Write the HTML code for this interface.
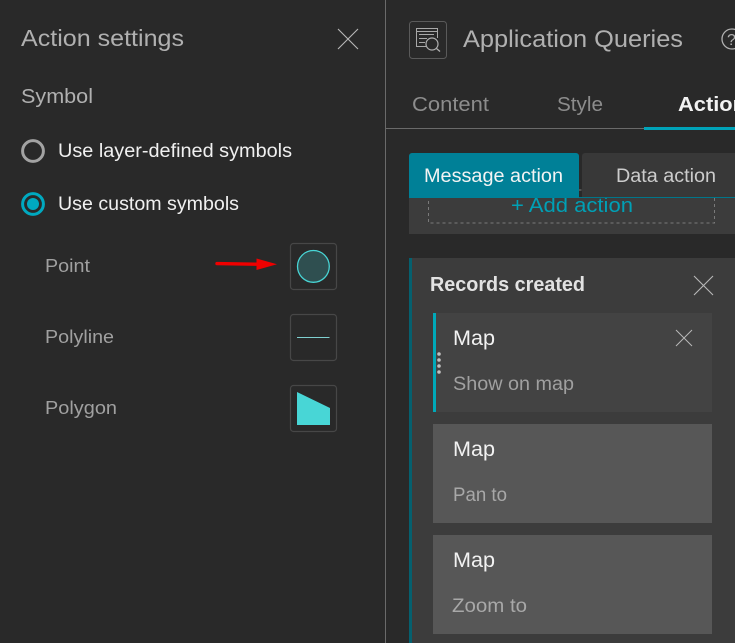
<!DOCTYPE html>
<html><head><meta charset="utf-8"><style>
html,body{margin:0;padding:0;background:#292929;width:735px;height:643px;overflow:hidden}
svg{display:block}
text{font-family:"Liberation Sans",sans-serif;white-space:pre}
</style></head><body>
<svg width="735" height="643" viewBox="0 0 735 643" xmlns="http://www.w3.org/2000/svg">
<rect width="735" height="643" fill="#292929"/>
<rect x="385" y="0" width="1" height="643" fill="#6a6a6a"/>

<text x="21" y="46" font-size="23" fill="#b0b0b0" textLength="163" lengthAdjust="spacingAndGlyphs">Action settings</text>
<path d="M338 29L358 49M358 29L338 49" stroke="#b8b8b8" stroke-width="1.1" fill="none"/>
<text x="21" y="103" font-size="20" fill="#b0b0b0" textLength="72" lengthAdjust="spacingAndGlyphs">Symbol</text>

<circle cx="33" cy="151" r="10.400" fill="none" stroke="#a3a3a3" stroke-width="3"/>
<text x="58" y="157" font-size="19" fill="#f0f0f0" textLength="234" lengthAdjust="spacingAndGlyphs">Use layer-defined symbols</text>
<circle cx="33" cy="204" r="10.400" fill="none" stroke="#00a9c0" stroke-width="3"/>
<circle cx="33" cy="204" r="6" fill="#00a9c0"/>
<text x="58" y="210" font-size="19" fill="#f0f0f0" textLength="181" lengthAdjust="spacingAndGlyphs">Use custom symbols</text>

<text x="45" y="272" font-size="18" fill="#a0a0a0" textLength="45" lengthAdjust="spacingAndGlyphs">Point</text>
<text x="45" y="343" font-size="18" fill="#a0a0a0" textLength="69" lengthAdjust="spacingAndGlyphs">Polyline</text>
<text x="45" y="414" font-size="18" fill="#a0a0a0" textLength="72" lengthAdjust="spacingAndGlyphs">Polygon</text>

<rect x="290.500" y="243.500" width="46" height="46" rx="3" fill="none" stroke="#474747" stroke-width="1.200"/>
<rect x="290.500" y="314.500" width="46" height="46" rx="3" fill="none" stroke="#474747" stroke-width="1.200"/>
<rect x="290.500" y="385.500" width="46" height="46" rx="3" fill="none" stroke="#474747" stroke-width="1.200"/>
<circle cx="313.400" cy="266.400" r="15.900" fill="#2f4f50" stroke="#48d5d5" stroke-width="1.300"/>
<rect x="297" y="337" width="32.500" height="1" fill="#7fd0d0"/>
<path d="M297 392L330 408V425H297Z" fill="#48d6d6"/>
<path d="M217 263.600L258 264.200" stroke="#f00000" stroke-width="3.400" stroke-linecap="round" fill="none"/>
<path d="M256.500 258.500L277 264.200L256.500 270Z" fill="#f00000"/>

<rect x="409.500" y="21.500" width="37" height="37" rx="3" fill="none" stroke="#5a5a5a" stroke-width="1"/>
<path d="M426 46.500H416.500V28.500H437.500V38" fill="none" stroke="#a8a8a8" stroke-width="1"/>
<path d="M417 31.500H437M419 34.500H434M419 38.500H427M419 42.500H425" fill="none" stroke="#a8a8a8" stroke-width="1"/>
<circle cx="432" cy="44" r="6" fill="#292929" stroke="#b0b0b0" stroke-width="1.200"/>
<path d="M436.500 48.500L440 51.500" stroke="#b0b0b0" stroke-width="1.300"/>
<text x="463" y="47" font-size="24" fill="#b0b0b0" textLength="220" lengthAdjust="spacingAndGlyphs">Application Queries</text>
<circle cx="732" cy="39" r="10" fill="none" stroke="#b0b0b0" stroke-width="1.300"/>
<text x="727" y="45" font-size="16" fill="#b0b0b0">?</text>

<text x="412" y="111" font-size="20" fill="#8c8c8c" textLength="77" lengthAdjust="spacingAndGlyphs">Content</text>
<text x="557" y="111" font-size="20" fill="#8c8c8c" textLength="46" lengthAdjust="spacingAndGlyphs">Style</text>
<text x="678" y="111" font-size="20" font-weight="bold" fill="#f2f2f2" textLength="68" lengthAdjust="spacingAndGlyphs">Action</text>
<rect x="386" y="128" width="349" height="1" fill="#6a6a6a"/>
<rect x="644" y="127" width="91" height="3" fill="#00a3b8"/>

<rect x="409" y="197" width="326" height="37" fill="#3c3c3c"/>
<rect x="428.500" y="190" width="286" height="33" fill="none" stroke="#7a7a7a" stroke-width="1" stroke-dasharray="3 3"/>
<text x="511" y="212" font-size="20" fill="#00a0b5" textLength="122" lengthAdjust="spacingAndGlyphs">+ Add action</text>
<path d="M582 197V156a3 3 0 0 1 3-3H735V197Z" fill="#383838"/>
<text x="616" y="182" font-size="19" fill="#cccccc" textLength="100" lengthAdjust="spacingAndGlyphs">Data action</text>
<rect x="579" y="197" width="156" height="1" fill="#00768a"/>
<path d="M409 198V156a3 3 0 0 1 3-3H576a3 3 0 0 1 3 3V198Z" fill="#008097"/>
<text x="424" y="182" font-size="19" fill="#f4f4f4" textLength="139" lengthAdjust="spacingAndGlyphs">Message action</text>

<rect x="409" y="258" width="326" height="385" fill="#3c3c3c"/>
<rect x="409" y="258" width="3" height="385" fill="#05606f"/>
<text x="430" y="291" font-size="20" font-weight="bold" fill="#e2e2e2" textLength="155" lengthAdjust="spacingAndGlyphs">Records created</text>
<path d="M694 276L713 295M713 276L694 295" stroke="#b8b8b8" stroke-width="1.100" fill="none"/>

<rect x="433" y="313" width="279" height="99" fill="#434343"/>
<rect x="433" y="313" width="3" height="99" fill="#00a9b9"/>
<text x="453" y="345" font-size="21" fill="#f2f2f2" textLength="42" lengthAdjust="spacingAndGlyphs">Map</text>
<path d="M676 330L692 346M692 330L676 346" stroke="#b8b8b8" stroke-width="1" fill="none"/>
<circle cx="439" cy="354" r="1.800" fill="#c0c0c0"/>
<circle cx="439" cy="360" r="1.800" fill="#c0c0c0"/>
<circle cx="439" cy="366" r="1.800" fill="#c0c0c0"/>
<circle cx="439" cy="372" r="1.800" fill="#c0c0c0"/>
<text x="453" y="390" font-size="19" fill="#a0a0a0" textLength="121" lengthAdjust="spacingAndGlyphs">Show on map</text>

<rect x="433" y="424" width="279" height="99" fill="#575757"/>
<text x="453" y="456" font-size="21" fill="#f2f2f2" textLength="42" lengthAdjust="spacingAndGlyphs">Map</text>
<text x="453" y="501" font-size="19" fill="#a8a8a8" textLength="54" lengthAdjust="spacingAndGlyphs">Pan to</text>

<rect x="433" y="535" width="279" height="99" fill="#575757"/>
<text x="453" y="567" font-size="21" fill="#f2f2f2" textLength="42" lengthAdjust="spacingAndGlyphs">Map</text>
<text x="452" y="612" font-size="19" fill="#a8a8a8" textLength="75" lengthAdjust="spacingAndGlyphs">Zoom to</text>
</svg>
</body></html>
